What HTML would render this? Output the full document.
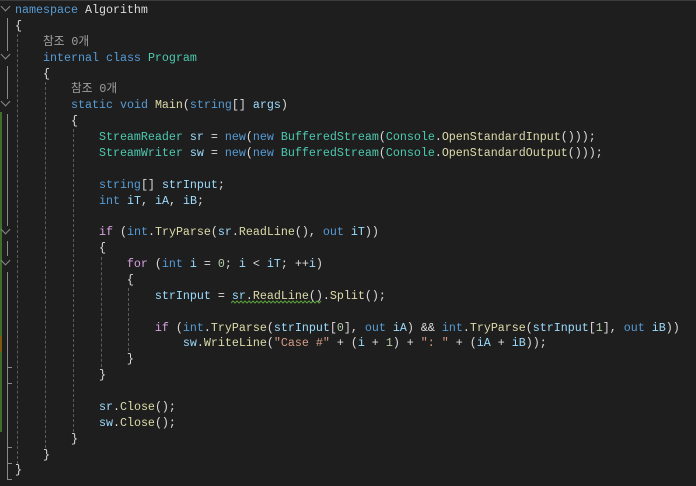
<!DOCTYPE html>
<html><head><meta charset="utf-8"><style>
html,body{margin:0;padding:0;background:#1e1e1e;width:696px;height:486px;overflow:hidden;position:relative}
.top{position:absolute;left:0;top:0;width:696px;height:1px;background:#3c3c3c}
pre{position:absolute;left:15px;top:3px;margin:0;font-family:"Liberation Mono","Noto Sans CJK KR",monospace;font-size:11.67px;line-height:15.88px;color:#dcdcdc;white-space:pre}
.k{color:#569cd6}.c{color:#d8a0df}.t{color:#4ec9b0}.m{color:#dcdcaa}.v{color:#9cdcfe}.s{color:#d69d85}.n{color:#b5cea8}.l{color:#a0a0a0}
.g{position:absolute;width:0;border-left:1px dashed #5a5a5a}
.o{position:absolute;left:7px;width:1px;background:#8a8a8a}
.tk{position:absolute;left:7px;width:5px;height:1px;background:#8a8a8a}
.ch{position:absolute;left:2px;width:6px;height:6px;border-right:1px solid #8a8a8a;border-bottom:1px solid #8a8a8a;transform:rotate(45deg)}
</style></head><body>
<div class="top"></div>
<div style="position:absolute;left:0;top:112px;width:2px;height:320px;background:#3f6f2e"></div>
<div style="position:absolute;left:0;top:336px;width:2px;height:16px;background:#7a5a10"></div>
<div class="o" style="top:18px;height:33px"></div>
<div class="o" style="top:66px;height:33px"></div>
<div class="o" style="top:114px;height:112px"></div>
<div class="o" style="top:241px;height:15px"></div>
<div class="o" style="top:272px;height:208px"></div>
<div class="tk" style="top:367px"></div><div class="tk" style="top:383px"></div><div class="tk" style="top:447px"></div><div class="tk" style="top:463px"></div><div class="tk" style="top:479px"></div>
<div class="ch" style="top:3px"></div><div class="ch" style="top:51px"></div><div class="ch" style="top:98px"></div><div class="ch" style="top:226px"></div><div class="ch" style="top:257px"></div>
<div class="g" style="left:17px;top:34px;height:430px"></div>
<div class="g" style="left:45px;top:82px;height:366px"></div>
<div class="g" style="left:73px;top:129px;height:303px"></div>
<div class="g" style="left:101px;top:257px;height:110px"></div>
<div class="g" style="left:128px;top:288px;height:63px"></div>
<svg style="position:absolute;left:231px;top:300px" width="92" height="5"><path d="M0 3 l2 -2 l2 2 l2 -2 l2 2 l2 -2 l2 2 l2 -2 l2 2 l2 -2 l2 2 l2 -2 l2 2 l2 -2 l2 2 l2 -2 l2 2 l2 -2 l2 2 l2 -2 l2 2 l2 -2 l2 2 l2 -2 l2 2 l2 -2 l2 2 l2 -2 l2 2 l2 -2 l2 2 l2 -2 l2 2 l2 -2 l2 2 l2 -2 l2 2 l2 -2 l2 2 l2 -2 l2 2 l2 -2 l2 2 l2 -2 l2 2 l2 -2" stroke="#5a9e3a" fill="none" stroke-width="1"/></svg>
<pre><span class="k">namespace</span> Algorithm
{
    <span class="l">참조 0개</span>
    <span class="k">internal</span> <span class="k">class</span> <span class="t">Program</span>
    {
        <span class="l">참조 0개</span>
        <span class="k">static</span> <span class="k">void</span> <span class="m">Main</span>(<span class="k">string</span>[] <span class="v">args</span>)
        {
            <span class="t">StreamReader</span> <span class="v">sr</span> = <span class="k">new</span>(<span class="k">new</span> <span class="t">BufferedStream</span>(<span class="t">Console</span>.<span class="m">OpenStandardInput</span>()));
            <span class="t">StreamWriter</span> <span class="v">sw</span> = <span class="k">new</span>(<span class="k">new</span> <span class="t">BufferedStream</span>(<span class="t">Console</span>.<span class="m">OpenStandardOutput</span>()));

            <span class="k">string</span>[] <span class="v">strInput</span>;
            <span class="k">int</span> <span class="v">iT</span>, <span class="v">iA</span>, <span class="v">iB</span>;

            <span class="c">if</span> (<span class="k">int</span>.<span class="m">TryParse</span>(<span class="v">sr</span>.<span class="m">ReadLine</span>(), <span class="k">out</span> <span class="v">iT</span>))
            {
                <span class="c">for</span> (<span class="k">int</span> <span class="v">i</span> = <span class="n">0</span>; <span class="v">i</span> &lt; <span class="v">iT</span>; ++<span class="v">i</span>)
                {
                    <span class="v">strInput</span> = <span class="v">sr</span>.<span class="m">ReadLine</span>().<span class="m">Split</span>();

                    <span class="c">if</span> (<span class="k">int</span>.<span class="m">TryParse</span>(<span class="v">strInput</span>[<span class="n">0</span>], <span class="k">out</span> <span class="v">iA</span>) &amp;&amp; <span class="k">int</span>.<span class="m">TryParse</span>(<span class="v">strInput</span>[<span class="n">1</span>], <span class="k">out</span> <span class="v">iB</span>))
                        <span class="v">sw</span>.<span class="m">WriteLine</span>(<span class="s">"Case #"</span> + (<span class="v">i</span> + <span class="n">1</span>) + <span class="s">": "</span> + (<span class="v">iA</span> + <span class="v">iB</span>));
                }
            }

            <span class="v">sr</span>.<span class="m">Close</span>();
            <span class="v">sw</span>.<span class="m">Close</span>();
        }
    }
}</pre>
</body></html>
